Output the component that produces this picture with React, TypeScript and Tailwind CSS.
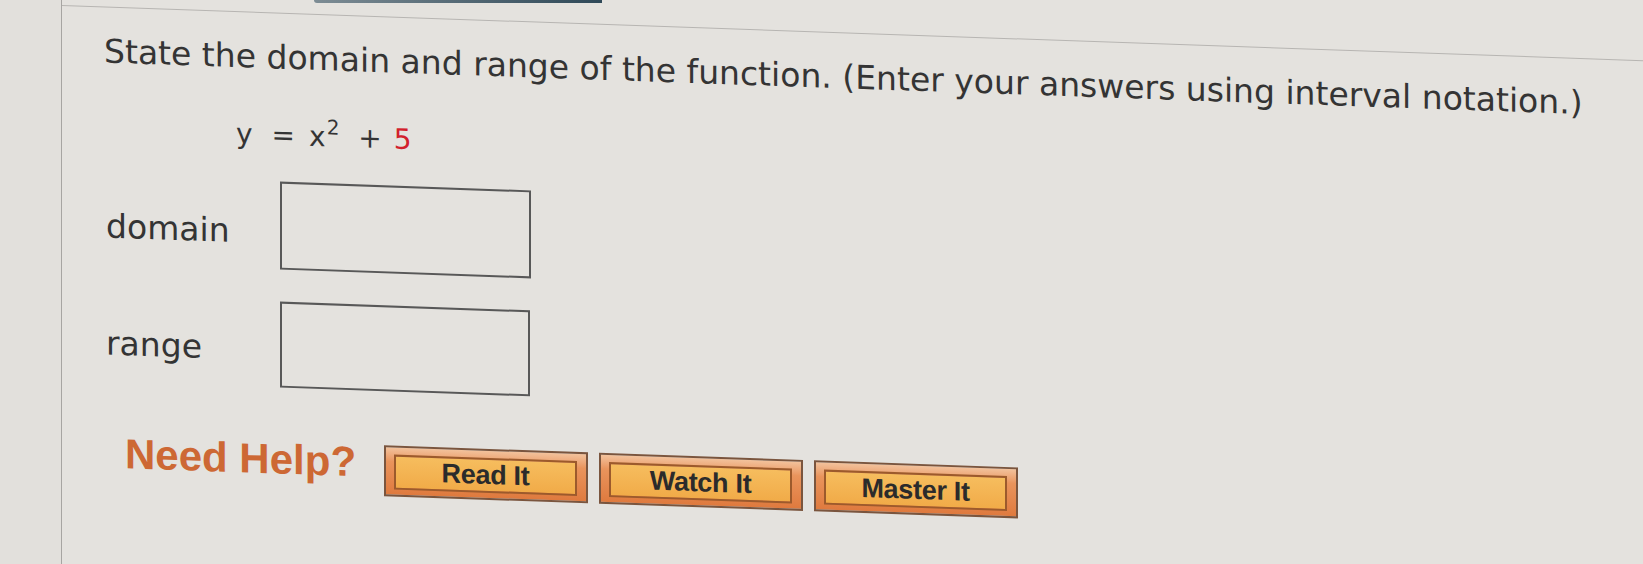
import React from 'react';

const HelpButton: React.FC<{ label: string }> = ({ label }) => (
  <button
    type="button"
    className="w-[204px] h-[51px] shrink-0 border-2 border-[#7a553e] bg-gradient-to-b from-[#f2c29c] via-[#e9945c] via-30% to-[#df7a3e] pt-[7px] pb-[5px] pl-[8px] pr-[9px] flex"
  >
    <span className="flex-1 flex items-center justify-center border-2 border-[#9c5a2c] bg-gradient-to-b from-[#f6bd5e] to-[#f1ab48] text-[27px] font-bold leading-none text-[#2b2b2b] tracking-[-0.3px] [font-family:'Liberation_Sans',Arial,sans-serif]">
      {label}
    </span>
  </button>
);

export default function App() {
  return (
    <div className="h-[564px] w-full overflow-hidden bg-[#e4e2de] flex [font-family:'DejaVu_Sans',Verdana,sans-serif] text-[#343434]">
      {/* left gutter */}
      <div className="w-[62px] shrink-0 border-r border-[#a7a5a2] bg-[#e2e0dc]" />

      <div className="flex-1 flex flex-col">
        <div className="h-[3px] flex">
          <div className="ml-[252px] w-[288px] h-[3px] rounded-bl-full bg-gradient-to-r from-[#7d8c94] to-[#2f4958]" />
        </div>

        <div className="origin-top-left skew-y-[2deg] mt-[2px] border-t border-[#b7b5b2] flex flex-col">
          <p className="mt-[24px] pl-[42px] text-[33px] leading-[40px] whitespace-nowrap">
            State the domain and range of the function. (Enter your answers using interval notation.)
          </p>

          <div className="mt-[42px] pl-[174px] text-[28px] leading-[32px] whitespace-nowrap flex items-baseline">
            <span>y</span>
            <span className="ml-[19px]">=</span>
            <span className="ml-[14px]">x</span>
            <sup className="text-[20px] leading-none ml-[1px] -translate-y-[2px]">2</sup>
            <span className="ml-[19px]">+</span>
            <span className="ml-[12px] text-[#d2202c]">5</span>
          </div>

          <div className="mt-[30px] pl-[44px] flex flex-col gap-[32px]">
            <div className="flex items-start">
              <span className="w-[174px] mt-[31px] text-[33px] leading-[40px]">domain</span>
              <div className="w-[251px] h-[88px] border-2 border-[#585858]" />
            </div>
            <div className="flex items-start">
              <span className="w-[174px] mt-[28px] text-[33px] leading-[40px]">range</span>
              <div className="w-[250px] h-[86px] border-2 border-[#585858]" />
            </div>
          </div>

          <div className="mt-[48px] pl-[63px] flex items-start">
            <span className="text-[42px] leading-[48px] font-bold text-[#cd6834] [font-family:'Liberation_Sans',Arial,sans-serif] whitespace-nowrap">
              Need Help?
            </span>
            <div className="ml-[28px] mt-[6px] flex gap-[11px]">
              <HelpButton label="Read It" />
              <HelpButton label="Watch It" />
              <HelpButton label="Master It" />
            </div>
          </div>
        </div>
      </div>
    </div>
  );
}
